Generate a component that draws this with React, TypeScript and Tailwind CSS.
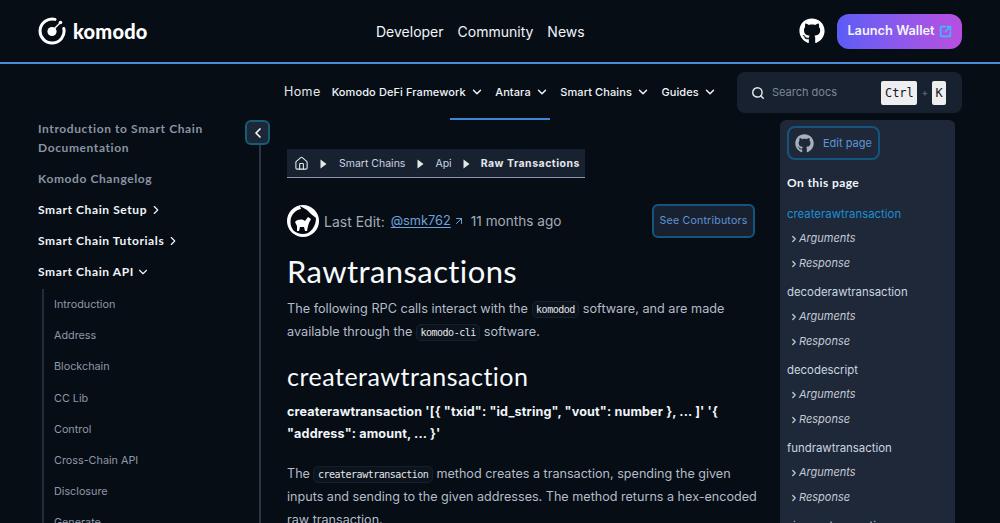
import React from 'react';
import { ChevronDown, ChevronLeft, ChevronRight, Home, Search, SquareArrowOutUpRight, ArrowUpRight } from 'lucide-react';
import { FaGithub } from 'react-icons/fa';

const inter = 'font-["Inter",sans-serif]';
const display = 'font-["Lato","Open_Sans",sans-serif]';

const subNav = [
  { label: 'Komodo DeFi Framework' },
  { label: 'Antara' },
  { label: 'Smart Chains' },
  { label: 'Guides' },
];

const apiPages = ['Introduction', 'Address', 'Blockchain', 'CC Lib', 'Control', 'Cross-Chain API', 'Disclosure', 'Generate'];

const tocGroups = ['createrawtransaction', 'decoderawtransaction', 'decodescript', 'fundrawtransaction', 'signrawtransaction'];

function Code({ children }: { children: React.ReactNode }) {
  return (
    <code className='rounded-[5px] border border-[#161f2c] bg-[#0b131d] px-[3.5px] py-[2px] font-["DejaVu_Sans_Mono",monospace] text-[10px] leading-none tracking-[-0.5px] text-[#e5e7eb]'>
      {children}
    </code>
  );
}

function Crumb() {
  return (
    <svg width="7" height="10" viewBox="0 0 7 10" className="shrink-0">
      <path d="M0.5 0.5 L6.5 5 L0.5 9.5 Z" fill="#e5e7eb" />
    </svg>
  );
}

function Logo() {
  return (
    <div className="flex items-center gap-[7px]">
      <svg width="28" height="28" viewBox="0 0 28 28" fill="none">
        <path d="M17 2.4 A12 12 0 1 0 25.8 11.5" stroke="white" strokeWidth="3" strokeLinecap="round" />
        <circle cx="14" cy="14.5" r="4.6" fill="white" />
        <path d="M16 12 L22 6" stroke="white" strokeWidth="1.5" />
        <circle cx="22.5" cy="5.5" r="1.8" fill="white" />
      </svg>
      <span className={`${display} text-[20px] font-black leading-none tracking-[0.2px] text-white`}>komodo</span>
    </div>
  );
}

function Avatar() {
  return (
    <svg width="32" height="32" viewBox="0 0 32 32" className="shrink-0">
      <circle cx="16" cy="16" r="16" fill="white" />
      <path d="M3.5 17 C3.5 9 9 5 14 4 L13 1 L20 5 L24 9 L29 13 C29 21 24 29 16 29 C8 29 3.5 24 3.5 17 Z" fill="#06090f" />
      <path d="M8 17 C11 14 15 14 18 16 L21 12 L24 14 L22 18 L21 21 L20 26 L18 26 L17 22 L13 22 L12 26 L10 26 L10 21 Z" fill="white" />
    </svg>
  );
}

export default function App() {
  return (
    <div className={`${inter} h-screen overflow-hidden bg-[#060d15] text-white`}>
      <header className="flex h-[64px] items-center border-b-2 border-[#4a8bd8] pl-[38px] pr-[38px]">
        <div className="w-[338px]">
          <Logo />
        </div>
        <nav className="flex gap-[14px] text-[14px] font-normal text-[#f1f5f9]">
          <a>Developer</a>
          <a>Community</a>
          <a>News</a>
        </nav>
        <div className="ml-auto flex items-center gap-[12px]">
          <FaGithub className="h-[26px] w-[26px] text-white" />
          <button className="flex h-[35px] w-[125px] items-center justify-center gap-[4px] rounded-[12px] bg-gradient-to-r from-[#5a5cf6] to-[#b84ee0] text-[12.8px] font-semibold text-[#f3f4f6]">
            Launch Wallet
            <SquareArrowOutUpRight className="h-[13px] w-[13px] text-[#38bdf8]" strokeWidth={3} />
          </button>
        </div>
      </header>

      <div className="flex h-[54px] items-start pl-[284px] pr-[38px] pt-[8px]">
        <div className="flex h-[40px] items-center gap-[11px] whitespace-nowrap">
          <a className="text-[12.5px] tracking-[0.4px] text-[#e5e7eb]">Home</a>
          <div className="flex items-center gap-[11.5px]">
            {subNav.map(item => (
              <a key={item.label} className="flex items-center gap-[4px] text-[11px] font-medium tracking-[0.1px] text-[#f1f5f9]">
                {item.label}
                <ChevronDown className="h-[14px] w-[14px]" strokeWidth={2.5} />
              </a>
            ))}
          </div>
        </div>
        <div className="ml-auto flex h-[41px] w-[225px] shrink-0 items-center rounded-[8px] bg-[#182130] pl-[14px] pr-[16px]">
          <Search className="h-[14px] w-[14px] text-[#e5e7eb]" strokeWidth={2.5} />
          <span className="ml-[7px] text-[11px] text-[#7d8796]">Search docs</span>
          <kbd className='ml-auto flex h-[24px] w-[36px] items-center justify-center rounded-[2px] bg-[#eeeeee] font-["DejaVu_Sans_Mono",monospace] text-[12px] text-[#111827]'>Ctrl</kbd>
          <span className="mx-[4px] text-[10px] text-[#6b7280]">+</span>
          <kbd className='flex h-[24px] w-[14px] items-center justify-center rounded-[2px] bg-[#eeeeee] font-["DejaVu_Sans_Mono",monospace] text-[12px] text-[#111827]'>K</kbd>
        </div>
      </div>
      <div className="ml-[450px] h-[2px] w-[100px] bg-[#3f84d6]" />

      <main className="flex">
        <aside className={`relative h-[403px] w-[261px] shrink-0 border-r-2 border-[#2b3544] pl-[38px] pr-[40px] ${display} text-[12px] tracking-[0.6px]`}>
          <button className="absolute right-[-11px] top-0 flex h-[25px] w-[25px] items-center justify-center rounded-[6px] border-2 border-[#155e75] bg-[#1c2838]">
            <ChevronLeft className="h-[16px] w-[16px] text-white" strokeWidth={2.5} />
          </button>
          <ul className="-mt-[1px] flex flex-col font-bold">
            <li className="pb-[6px] leading-[19px] text-[#8a94a3]">Introduction to Smart Chain Documentation</li>
            <li className="py-[6px] leading-[19px] text-[#8a94a3]">Komodo Changelog</li>
            <li className="flex items-center gap-[2px] py-[6px] leading-[19px] text-[#f1f5f9]">Smart Chain Setup<ChevronRight className="h-[14px] w-[14px]" strokeWidth={2} /></li>
            <li className="flex items-center gap-[2px] py-[6px] leading-[19px] text-[#f1f5f9]">Smart Chain Tutorials<ChevronRight className="h-[14px] w-[14px]" strokeWidth={2} /></li>
            <li className="flex items-center gap-[2px] py-[6px] leading-[19px] text-[#f1f5f9]">Smart Chain API<ChevronDown className="h-[14px] w-[14px]" strokeWidth={2} /></li>
          </ul>
          <ul className={`ml-[4px] mt-[2px] border-l-2 border-[#232c39] pl-[10px] ${inter} text-[10.8px] tracking-normal text-[#8f98a6]`}>
            {apiPages.map(page => (
              <li key={page} className="py-[6px] leading-[19.2px]">{page}</li>
            ))}
          </ul>
        </aside>

        <article className="ml-[26px] w-[468px] shrink-0 pt-[29px]">
          <div className="flex h-[29px] w-[298px] items-center whitespace-nowrap border-b border-[#8b97a8] bg-[#182130] pl-[7px] pt-[1px] text-[10.5px] text-[#cbd5e1]">
            <Home className="h-[15px] w-[15px] text-[#e5e7eb]" strokeWidth={1.75} />
            <span className="ml-[11px]"><Crumb /></span>
            <span className="ml-[12px]">Smart Chains</span>
            <span className="ml-[12px]"><Crumb /></span>
            <span className="ml-[11px]">Api</span>
            <span className="ml-[11px]"><Crumb /></span>
            <span className="ml-[11px] font-bold tracking-[0.5px] text-[#e5e7eb]">Raw Transactions</span>
          </div>

          <div className="mt-[26px] flex items-center">
            <Avatar />
            <span className="ml-[5px] text-[14px] text-[#a3acb8]">Last Edit:</span>
            <a className="ml-[6px] text-[12.8px] text-[#6ea2dc] underline underline-offset-2">@smk762</a>
            <ArrowUpRight className="ml-[2px] h-[12px] w-[12px] text-[#6ea2dc]" />
            <span className="ml-[6px] text-[13.6px] text-[#a3acb8]">11 months ago</span>
            <button className="ml-auto flex h-[34px] w-[103px] items-center justify-center rounded-[6px] border-2 border-[#14557f] bg-[#182130] text-[10.6px] tracking-[0.2px] text-[#5f95d6]">
              See Contributors
            </button>
          </div>

          <h1 className={`${display} mt-[13px] text-[31px] font-normal leading-[40px] tracking-[0.4px] text-[#f8fafc]`}>Rawtransactions</h1>
          <p className="mt-[6px] text-[12.7px] leading-[23px] text-[#b4bcc8]">
            The following RPC calls interact with the <Code>komodod</Code> software, and are made available through the <Code>komodo-cli</Code> software.
          </p>
          <h2 className={`${display} mt-[16px] text-[25px] font-normal leading-[34px] tracking-[0.5px] text-[#f8fafc]`}>createrawtransaction</h2>
          <p className="mt-[8px] text-[12.6px] font-bold leading-[22px] tracking-[0.15px] text-[#f1f5f9]">
            createrawtransaction '[{'{'} "txid": "id_string", "vout": number {'}'}, ... ]' '{'{'} "address": amount, ... {'}'}'
          </p>
          <p className="-mr-[6px] mt-[17px] text-[12.6px] leading-[23px] text-[#b4bcc8]">
            The <Code>createrawtransaction</Code> method creates a transaction, spending the given inputs and sending to the given addresses. The method returns a hex-encoded raw transaction.
          </p>
        </article>

        <nav className="ml-[25px] h-[403px] w-[175px] shrink-0 overflow-hidden rounded-t-[6px] bg-[#1e2839] px-[7px] pt-[6px]">
          <a className="flex h-[34px] w-[93px] items-center gap-[9px] rounded-[8px] border-2 border-[#14557f] pl-[6px] text-[11px] text-[#5f95d6]">
            <FaGithub className="h-[19px] w-[19px] shrink-0 text-[#a7b0bd]" />
            Edit page
          </a>
          <p className={`${display} mt-[13px] text-[12px] font-bold leading-[20px] tracking-[0.4px] text-[#f1f5f9]`}>On this page</p>
          <ul className="mt-[9px]">
            {tocGroups.map((group, i) => (
              <li key={group} className="mb-[4px]">
                <p className={`text-[11.4px] leading-[24px] ${i === 0 ? 'text-[#1d8fd1]' : 'text-[#cbd5e1]'}`}>{group}</p>
                {['Arguments', 'Response'].map(sub => (
                  <p key={sub} className="flex h-[25px] items-center pl-[2px] text-[11px] italic text-[#c3cad5]">
                    <ChevronRight className="h-[10px] w-[10px]" strokeWidth={3} />
                    <span>{sub}</span>
                  </p>
                ))}
              </li>
            ))}
          </ul>
        </nav>
      </main>
    </div>
  );
}
